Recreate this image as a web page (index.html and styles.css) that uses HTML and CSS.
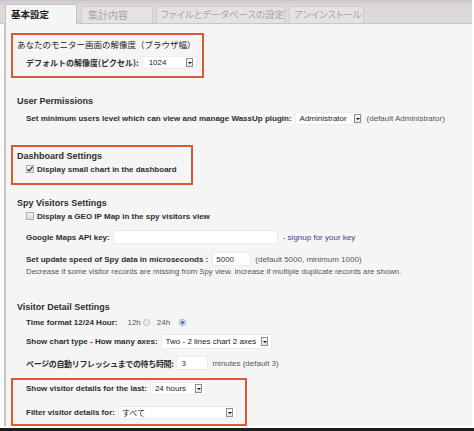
FILE: index.html
```html
<!DOCTYPE html>
<html lang="ja">
<head>
<meta charset="utf-8">
<title>WassUp Options</title>
<link rel="stylesheet" href="styles.css">
</head>
<body>
<div class="tabs">
  <div class="tab active">基本設定</div>
  <div class="tab t2">集計内容</div>
  <div class="tab t3">ファイルとデータベースの設定</div>
  <div class="tab t4">アンインストール</div>
</div>
<div class="panel">
  <div class="sec boxed b1">
    <div class="h jp-title">あなたのモニター画面の解像度（ブラウザ幅）</div>
    <div class="row r-res">
      <span class="lbl jp">デフォルトの解像度(ピクセル):</span>
      <span class="select s-res"><span class="val">1024</span><span class="btn"></span></span>
    </div>
  </div>

  <div class="sec s-perm">
    <div class="h">User Permissions</div>
    <div class="row r-perm">
      <span class="lbl">Set minimum users level which can view and manage WassUp plugin:</span>
      <span class="select s-admin"><span class="val">Administrator</span><span class="btn"></span></span>
      <span class="note">(default Administrator)</span>
    </div>
  </div>

  <div class="sec boxed b2">
    <div class="h">Dashboard Settings</div>
    <div class="row r-dash">
      <span class="check checked"><svg viewBox="0 0 8 8" width="8" height="8"><path d="M1.5 4.2 L3.2 5.9 L6.6 1.8" fill="none" stroke="#333" stroke-width="1.3"/></svg></span>
      <span class="lbl">Display small chart in the dashboard</span>
    </div>
  </div>

  <div class="sec s-spy">
    <div class="h">Spy Visitors Settings</div>
    <div class="row r-geo">
      <span class="check"></span>
      <span class="lbl">Display a GEO IP Map in the spy visitors view</span>
    </div>
    <div class="row r-gmap">
      <span class="lbl">Google Maps API key:</span>
      <span class="input i-gmap"></span>
      <a class="link" href="#">- signup for your key</a>
    </div>
    <div class="row r-speed">
      <span class="lbl">Set update speed of Spy data in microseconds :</span>
      <span class="input i-speed">5000</span>
      <span class="note">(default 5000, minimum 1000)</span>
    </div>
    <div class="desc">Decrease if some visitor records are missing from Spy view. Increase if multiple duplicate records are shown.</div>
  </div>

  <div class="sec s-vis">
    <div class="h">Visitor Detail Settings</div>
    <div class="row r-time">
      <span class="lbl">Time format 12/24 Hour:</span>
      <span class="note opt">12h</span><span class="radio"></span>
      <span class="note opt">24h</span><span class="radio on"></span>
    </div>
    <div class="row r-chart">
      <span class="lbl">Show chart type - How many axes:</span>
      <span class="select s-chart"><span class="val">Two - 2 lines chart 2 axes</span><span class="btn"></span></span>
    </div>
    <div class="row r-refresh">
      <span class="lbl jp jp-tight">ページの自動リフレッシュまでの待ち時間:</span>
      <span class="input i-refresh">3</span>
      <span class="note">minutes (default 3)</span>
    </div>
  </div>

  <div class="sec boxed b3">
    <div class="row r-last">
      <span class="lbl">Show visitor details for the last:</span>
      <span class="select s-hours"><span class="val">24 hours</span><span class="btn"></span></span>
    </div>
    <div class="row r-filter">
      <span class="lbl">Filter visitor details for:</span>
      <span class="select s-filter"><span class="val jp">すべて</span><span class="btn"></span></span>
    </div>
  </div>
</div>
<div class="footer"></div>
</body>
</html>
```
FILE: styles.css
```css
html, body {
  margin: 0;
  padding: 0;
  background: #ffffff;
}
body {
  width: 474px;
  height: 431px;
  overflow: hidden;
  font-family: "Liberation Sans", Arial, "Noto Sans CJK JP", sans-serif;
  color: #333;
}

/* tabs */
.tabs {
  width: 472px;
  height: 24px;
  box-sizing: border-box;
  background: linear-gradient(#cbc5cb 0, #d6d1d6 3px, #dcd8dc 6px, #dcd8dc 100%);
  border-bottom: 1px solid #c9c5c9;
  display: flex;
  align-items: flex-end;
  padding-left: 5px;
}
.tab {
  box-sizing: border-box;
  height: 17px;
  margin-right: 3px;
  background: #e5e2e5;
  border: 1px solid #cfcbcf;
  border-bottom: none;
  font-family: "Noto Sans CJK JP", sans-serif;
  font-size: 9.5px;
  line-height: 15px;
  color: #a6a6a6;
  padding-left: 5px;
  white-space: nowrap;
  overflow: hidden;
  font-feature-settings: "palt";
}
.tab.active {
  width: 72px;
  height: 20px;
  margin-bottom: -1px;
  margin-right: 4px;
  background: #f5f5f5;
  border-color: #c4c4c4;
  color: #1e1e1e;
  font-weight: bold;
  line-height: 19px;
  font-size: 9.5px;
  font-feature-settings: normal;
}
.tab.t2 { width: 72px; padding-left: 6px; font-size: 10px; }
.tab.t3 { width: 129px; padding-left: 4px; margin-right: 4px; }
.tab.t4 { width: 75px; padding-left: 4px; }

/* panel */
.panel {
  display: flow-root;
  margin-left: 4px;
  width: 468px;
  box-sizing: border-box;
  background: #f5f5f5;
  border-left: 2px solid #c6c6c6;
}

.sec {
  margin-left: 5px;
  border: 2px solid transparent;
  padding: 3px 0 7px 4px;
  box-sizing: border-box;
}
.boxed {
  border-color: #dc5a31;
}
.b1 { margin-top: 9px; width: 193px; }
.s-perm { margin-top: 12px; }
.b2 { margin-top: 11px; width: 182px; }
.s-spy { margin-top: 7px; }
.s-vis { margin-top: 9px; padding-bottom: 0; }
.b3 { margin-top: 6px; width: 236px; padding-top: 1px; padding-bottom: 5px; }

.h {
  font-size: 9px;
  font-weight: bold;
  line-height: 12px;
  height: 12px;
  color: #2e2e2e;
  white-space: nowrap;
}
.jp-title {
  font-family: "Noto Sans CJK JP", sans-serif;
  font-size: 8.5px;
  font-weight: normal;
  color: #1e1e1e;
}

.row {
  display: flex;
  align-items: center;
  padding-left: 9px;
  height: 14px;
  white-space: nowrap;
  font-size: 8px;
}
.lbl {
  font-weight: bold;
  color: #2e2e2e;
  margin-right: 3px;
}
.jp {
  font-family: "Noto Sans CJK JP", sans-serif;
}
.jp-tight {
  letter-spacing: -0.35px;
}
.note {
  color: #555;
  font-weight: normal;
}

.r-res { margin-top: 5px; }
.r-perm { margin-top: 4px; }
.r-dash { height: 14px; }
.r-geo { margin-top: 1px; height: 12px; }
.r-gmap { margin-top: 8px; }
.r-speed { margin-top: 8px; }
.r-time { margin-top: 3px; height: 12px; }
.r-chart { margin-top: 6px; height: 15px; }
.r-refresh { margin-top: 7px; }
.r-filter { margin-top: 10px; }

.desc {
  padding-left: 9px;
  font-size: 7.8px;
  line-height: 12px;
  height: 12px;
  color: #555;
  white-space: nowrap;
}

/* controls */
.select {
  display: inline-flex;
  align-items: center;
  justify-content: space-between;
  box-sizing: border-box;
  height: 13px;
  background: #fff;
  border: 1px solid #ececec;
  font-size: 8px;
  color: #222;
  padding: 0 3px 0 6px;
  margin-right: 5px;
}
.select .btn {
  position: relative;
  width: 7px;
  height: 9px;
  box-sizing: border-box;
  border: 1px solid #8e8e8e;
  background: linear-gradient(#fafafa, #e4e4e4);
}
.select .btn::after {
  content: "";
  position: absolute;
  left: 1px;
  top: 3px;
  border-left: 2px solid transparent;
  border-right: 2px solid transparent;
  border-top: 2px solid #111;
}
.s-res { width: 56px; }
.s-admin { width: 67px; padding-left: 4px; padding-right: 0; }
.s-chart { width: 111px; height: 15px; padding-left: 4px; }
.s-hours { width: 56px; padding-left: 4px; }
.s-filter { width: 119px; padding-left: 3px; }

.input {
  display: inline-flex;
  align-items: center;
  box-sizing: border-box;
  height: 14px;
  background: #fff;
  border: 1px solid #ececec;
  font-size: 8px;
  color: #333;
  padding-left: 3px;
  margin-right: 4px;
}
.i-gmap { width: 165px; }
.i-speed { width: 39px; margin-left: 1px; }
.i-refresh { width: 32px; padding-left: 4px; }

.link {
  color: #3e3e94;
  text-decoration: none;
  font-size: 8px;
  margin-left: 1px;
}

.check {
  display: inline-block;
  box-sizing: border-box;
  width: 8px;
  height: 8px;
  border: 1px solid #b0b0b0;
  background: linear-gradient(#f2f2f2, #dcdcdc);
  margin-right: 3px;
  position: relative;
}
.check svg {
  position: absolute;
  left: -1px;
  top: -1px;
}

.opt { margin-left: 7px; }
.radio {
  display: inline-block;
  box-sizing: border-box;
  width: 7px;
  height: 7px;
  border-radius: 50%;
  border: 1px solid #b9b9b9;
  background: #ececec;
  margin-left: 2px;
  position: relative;
}
.radio.on {
  margin-left: 9px;
  border-color: #8ea4c8;
}
.radio.on::after {
  content: "";
  position: absolute;
  left: 1px;
  top: 1px;
  width: 3px;
  height: 3px;
  border-radius: 50%;
  background: #3b62b0;
}

.footer {
  margin-top: 2px;
  height: 3px;
  background: #1c1c1c;
}
```
